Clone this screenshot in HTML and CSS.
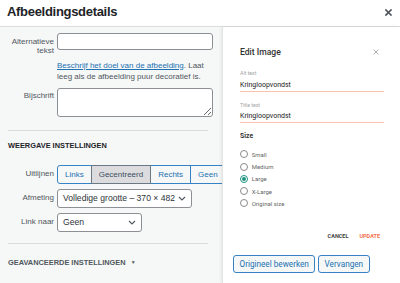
FILE: index.html
```html
<!DOCTYPE html>
<html lang="nl">
<head>
<meta charset="utf-8">
<title>Afbeeldingsdetails</title>
<link rel="stylesheet" href="styles.css">
</head>
<body>
<header class="hdr">
  <h1 class="hdr-title">Afbeeldingsdetails</h1>
  <button class="hdr-close" aria-label="Sluiten">
    <svg width="7" height="7" viewBox="0 0 7 7"><path d="M1 1L6 6M6 1L1 6" stroke="#50575e" stroke-width="1.7" stroke-linecap="square"/></svg>
  </button>
</header>
<main class="main">
  <section class="left">
    <div class="row">
      <label class="lbl">Alternatieve tekst</label>
      <input class="field" type="text">
      <p class="help"><a href="#">Beschrijf het doel van de afbeelding</a>. Laat<br>leeg als de afbeelding puur decoratief is.</p>
    </div>
    <div class="row row-caption">
      <label class="lbl">Bijschrift</label>
      <textarea class="field area"></textarea>
    </div>
    <hr class="div div-1">
    <h2 class="sec">Weergave instellingen</h2>
    <div class="row row-c row-align">
      <span class="lbl lbl-c">Uitlijnen</span>
      <div class="seg">
        <button class="seg-btn">Links</button>
        <button class="seg-btn on">Gecentreerd</button>
        <button class="seg-btn">Rechts</button>
        <button class="seg-btn">Geen</button>
      </div>
    </div>
    <div class="row row-c row-sel">
      <span class="lbl lbl-c">Afmeting</span>
      <div class="sel sel-size"><span>Volledige grootte – 370 × 482</span><svg class="chev" width="8" height="5" viewBox="0 0 8 5"><path d="M1 1l3 3 3-3" fill="none" stroke="#50575e" stroke-width="1.1"/></svg></div>
    </div>
    <div class="row row-c row-sel">
      <span class="lbl lbl-c">Link naar</span>
      <div class="sel sel-link"><span>Geen</span><svg class="chev" width="8" height="5" viewBox="0 0 8 5"><path d="M1 1l3 3 3-3" fill="none" stroke="#50575e" stroke-width="1.1"/></svg></div>
    </div>
    <hr class="div div-2">
    <h2 class="sec sec-adv">Geavanceerde instellingen <span class="tri">▼</span></h2>
  </section>
  <section class="right">
    <div class="edit">
      <div class="edit-head">
        <span class="edit-title">Edit Image</span>
        <svg class="edit-x" width="6" height="6" viewBox="0 0 6 6"><path d="M0.5 0.5L5.5 5.5M5.5 0.5L0.5 5.5" stroke="#9a9a9a" stroke-width="0.8"/></svg>
      </div>
      <div class="mf mf-1">
        <div class="mf-lbl">Alt text</div>
        <div class="mf-val">Kringloopvondst</div>
      </div>
      <div class="mf mf-2">
        <div class="mf-lbl">Title text</div>
        <div class="mf-val">Kringloopvondst</div>
      </div>
      <div class="size-title">Size</div>
      <ul class="radios">
        <li class="rad"><span class="dot"></span>Small</li>
        <li class="rad"><span class="dot"></span>Medium</li>
        <li class="rad"><span class="dot dot-on"></span>Large</li>
        <li class="rad"><span class="dot"></span>X-Large</li>
        <li class="rad"><span class="dot"></span>Original size</li>
      </ul>
      <div class="acts">
        <span class="act act-cancel">CANCEL</span>
        <span class="act act-update">UPDATE</span>
      </div>
    </div>
    <div class="btns">
      <button class="wpbtn">Origineel bewerken</button>
      <button class="wpbtn">Vervangen</button>
    </div>
  </section>
</main>
</body>
</html>
```

FILE: styles.css
```css
* { box-sizing: border-box; }
html, body { margin: 0; padding: 0; }
body {
  width: 400px;
  height: 283px;
  overflow: hidden;
  background: #fff;
  font-family: "Liberation Sans", Arial, sans-serif;
  color: #1d2327;
}
button { font-family: inherit; }

.hdr {
  height: 27px;
  background: #fff;
  border-bottom: 1px solid #dcdcde;
  display: flex;
  align-items: center;
  justify-content: space-between;
  padding: 0 8px 2px 7px;
}
.hdr-title {
  margin: 0;
  font-size: 13px;
  line-height: 16px;
  font-weight: bold;
  letter-spacing: -0.3px;
  color: #1d2327;
}
.hdr-close {
  border: 0;
  background: none;
  padding: 0;
  width: 7px;
  height: 7px;
  display: flex;
}

.main {
  display: flex;
  height: 256px;
}

.left {
  width: 222px;
  flex: none;
  background: #f6f7f7;
  padding: 6px 9px 0 8px;
  overflow: hidden;
}
.row {
  display: grid;
  grid-template-columns: 46px 156px;
  column-gap: 3px;
  align-items: start;
}
.lbl {
  text-align: right;
  font-size: 8px;
  line-height: 8.5px;
  color: #50575e;
  padding-top: 5px;
}
.lbl-c { padding-top: 0; align-self: center; }
.field {
  display: block;
  width: 156px;
  height: 17px;
  margin: 0;
  background: #fff;
  border: 1px solid #8c8f94;
  border-radius: 3px;
  font-family: inherit;
}
.help {
  grid-column: 2;
  margin: 4.5px 0 0;
  font-size: 8px;
  line-height: 11px;
  color: #50575e;
}
.help a { color: #2271b1; text-underline-offset: 1px; }
.row-caption { margin-top: 6.5px; }
.row-caption .lbl { padding-top: 4px; }
.area { height: 29px; resize: vertical; }

.div {
  border: 0;
  border-top: 1px solid #dcdcde;
  width: 200px;
  margin: 0;
}
.div-1 { margin-top: 12.5px; }
.div-2 { margin-top: 11.5px; }

.sec {
  margin: 10.5px 0 0;
  font-size: 7.4px;
  line-height: 10px;
  font-weight: bold;
  text-transform: uppercase;
  color: #1d2327;
}
.sec-adv { margin-top: 12.5px; color: #50575e; }
.tri { font-size: 5px; margin-left: 3px; vertical-align: 1px; }

.row-c { align-items: center; grid-template-columns: 46px auto; }
.row-align { margin-top: 13.5px; }
.row-sel { margin-top: 5.5px; }
.seg { display: flex; }
.seg-btn {
  height: 19px;
  padding: 0 7px;
  margin: 0 0 0 -1px;
  background: #f6f7f7;
  border: 1px solid #3582c4;
  color: #2271b1;
  font-size: 8px;
  line-height: 17px;
  border-radius: 0;
  white-space: nowrap;
}
.seg-btn:first-child { margin-left: 0; border-radius: 3px 0 0 3px; }
.seg-btn.on {
  background: #dcdcde;
  border-color: #6b7885;
  color: #3c4d60;
  position: relative;
  z-index: 1;
}
.sel {
  height: 18.5px;
  background: #fff;
  border: 1px solid #8c8f94;
  border-radius: 3px;
  display: flex;
  align-items: center;
  justify-content: space-between;
  padding: 0 5px 0 5px;
  font-size: 8.6px;
  color: #2c3338;
  white-space: nowrap;
}
.sel-size { width: 135px; }
.sel-link { width: 84.5px; }
.chev { flex: none; }

.right {
  flex: 1;
  background: #fff;
  border-left: 1px solid #e4e4e4;
  box-shadow: -1px 0 3px rgba(0,0,0,0.08);
  position: relative;
  font-family: Roboto, "Liberation Sans", Arial, sans-serif;
}
.edit { padding: 18.7px 16px 0 17px; }
.edit-head {
  display: flex;
  align-items: center;
  justify-content: space-between;
  padding-right: 5px;
}
.edit-title {
  font-size: 8.6px;
  line-height: 12px;
  font-weight: 500;
  color: #333;
}
.edit-x { display: block; }
.mf-1 { margin-top: 12.8px; }
.mf-2 { margin-top: 9.8px; }
.mf-lbl {
  font-size: 5.2px;
  line-height: 7px;
  color: #a3a3a3;
}
.mf-val {
  margin-top: 3.8px;
  font-size: 7px;
  line-height: 9px;
  color: #222;
  padding-bottom: 0.5px;
  border-bottom: 1px solid #f7c2b2;
}
.size-title {
  margin-top: 9.5px;
  font-size: 6.8px;
  line-height: 9px;
  font-weight: bold;
  color: #333;
}
.radios {
  list-style: none;
  margin: 7px 0 0;
  padding: 0;
}
.rad {
  height: 12.2px;
  display: flex;
  align-items: center;
  font-size: 6px;
  color: #666;
}
.dot {
  width: 8px;
  height: 8px;
  border: 1px solid #8a8a8a;
  border-radius: 50%;
  margin: 0 4.2px 0 -0.5px;
  flex: none;
  display: flex;
  align-items: center;
  justify-content: center;
}
.dot-on { border-color: #1f9280; }
.dot-on::after {
  content: "";
  width: 4px;
  height: 4px;
  border-radius: 50%;
  background: #1f9280;
}
.acts {
  margin-top: 22.2px;
  display: flex;
  justify-content: flex-end;
  gap: 11px;
  padding-right: 4px;
}
.act {
  font-size: 5.5px;
  line-height: 8px;
  font-weight: bold;
}
.act-cancel { color: #444; }
.act-update { color: #f4724f; }

.btns {
  display: flex;
  gap: 2.7px;
  padding-left: 10px;
  margin-top: 15.7px;
}
.wpbtn {
  height: 17.6px;
  padding: 0 5.5px;
  background: #f6f7f7;
  border: 1px solid #3582c4;
  border-radius: 3px;
  color: #2271b1;
  font-size: 8.2px;
  white-space: nowrap;
}
```
